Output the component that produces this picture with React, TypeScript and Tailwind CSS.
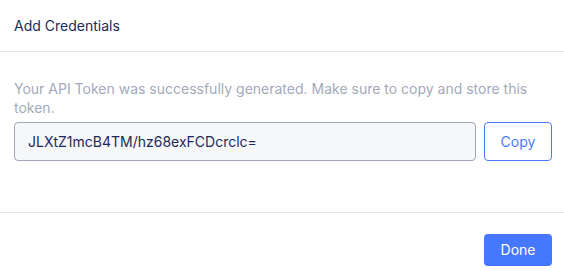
export default function App() {
  return (
    <div className="w-[564px] h-[271px] bg-white overflow-hidden font-['Inter',sans-serif] text-sm">
      <div className="h-[52px] border-b border-[#e4e6ee] pl-[14px] flex items-center">
        <h2 className="text-[#1d2a57] text-sm pt-px">Add Credentials</h2>
      </div>

      <div className="pl-[14px] pr-3 pt-[27px] h-[160px]">
        <p className="text-[#a3aab9] leading-[19px]">
          Your API Token was successfully generated. Make sure to copy and store this token.
        </p>
        <div className="flex gap-2 mt-[5px]">
          <input
            readOnly
            value="JLXtZ1mcB4TM/hz68exFCDcrclc="
            className="flex-1 h-[39px] rounded border border-[#9ea6b8] bg-[#f6f7f9] px-[13px] text-[#1d2a57] outline-none"
          />
          <button className="w-[68px] h-[39px] rounded border border-[#4a7bff] text-[#4a7bff]">
            Copy
          </button>
        </div>
      </div>

      <div className="border-t border-[#e4e6ee] pl-[14px] pr-3 pt-[21px] flex justify-end">
        <button className="w-[68px] h-8 rounded bg-[#4677ff] text-white">Done</button>
      </div>
    </div>
  );
}
